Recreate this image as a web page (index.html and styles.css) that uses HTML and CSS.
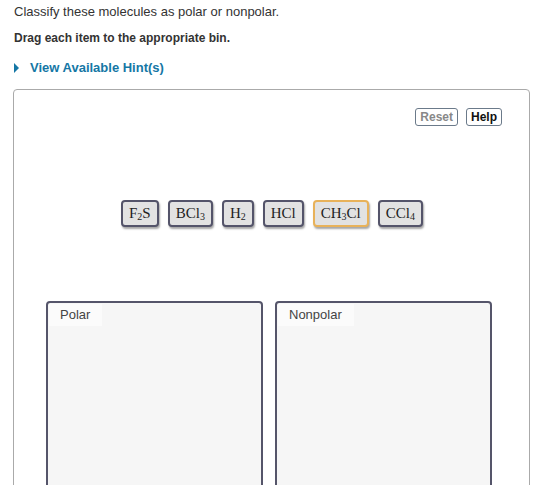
FILE: index.html
```html
<!DOCTYPE html>
<html lang="en">
<head>
    <meta charset="UTF-8">
    <title>Classify Molecules</title>
    <link rel="stylesheet" href="styles.css">
</head>
<body>

    <p class="prompt">Classify these molecules as polar or nonpolar.</p>
    <p class="instruction">Drag each item to the appropriate bin.</p>
    <div class="hint"><span class="arrow"></span>View Available Hint(s)</div>

    <div id="container">
        <div class="toolbar">
            <button class="btn btn-reset">Reset</button>
            <button class="btn btn-help">Help</button>
        </div>

        <div class="tiles">
            <div class="tile">F<sub>2</sub>S</div>
            <div class="tile">BCl<sub>3</sub></div>
            <div class="tile">H<sub>2</sub></div>
            <div class="tile">HCl</div>
            <div class="tile selected">CH<sub>3</sub>Cl</div>
            <div class="tile">CCl<sub>4</sub></div>
        </div>

        <div class="bins">
            <div class="bin"><div class="bin-label">Polar</div></div>
            <div class="bin"><div class="bin-label">Nonpolar</div></div>
        </div>
    </div>

</body>
</html>
```
FILE: styles.css
```css
body {
    font-family: 'Liberation Sans', Arial, sans-serif;
    margin: 0;
    padding: 4px 0 0 14px;
    color: #333;
    background-color: #fff;
    font-size: 12px;
    overflow: hidden;
}

.prompt {
    margin: 0 0 10px 0;
    font-size: 13px;
    line-height: 16px;
}

.instruction {
    margin: 0 0 14px 0;
    font-weight: bold;
    line-height: 16px;
}

.hint {
    display: flex;
    align-items: center;
    font-size: 13px;
    font-weight: bold;
    color: #1577a5;
    line-height: 16px;
}

.arrow {
    width: 0;
    height: 0;
    border-top: 5px solid transparent;
    border-bottom: 5px solid transparent;
    border-left: 5px solid #1577a5;
    margin-right: 11px;
}

#container {
    margin: 13px 0 0 -1px;
    width: 517px;
    height: 420px;
    border: 1px solid #aaa;
    border-radius: 4px;
    box-sizing: border-box;
}

.toolbar {
    display: flex;
    justify-content: flex-end;
    gap: 8px;
    padding: 18px 27px 0 0;
}

.btn {
    font-family: 'Liberation Sans', Arial, sans-serif;
    font-size: 12px;
    font-weight: bold;
    padding: 2px 4px;
    height: 18px;
    line-height: 12px;
    background-color: #fff;
    border: 1px solid #6b7a8a;
    border-radius: 3px;
}

.btn-reset {
    color: #888;
}

.btn-help {
    color: #111;
}

.tiles {
    display: flex;
    justify-content: center;
    gap: 9px;
    margin-top: 74px;
    padding-left: 1px;
}

.tile {
    font-family: 'Liberation Serif', 'DejaVu Serif', serif;
    font-size: 15px;
    color: #222;
    background-color: #e2e2e2;
    border: 2px solid #54546a;
    border-radius: 4px;
    padding: 0 6px;
    height: 27px;
    line-height: 23px;
    box-sizing: border-box;
    box-shadow: 1px 2px 2px rgba(0, 0, 0, 0.35);
}

.tile sub {
    font-size: 10px;
    vertical-align: -2px;
    line-height: 0;
}

.tile.selected {
    border-color: #e8b25a;
}

.bins {
    display: flex;
    gap: 12px;
    padding-left: 32px;
    margin-top: 74px;
}

.bin {
    width: 217px;
    height: 200px;
    background-color: #f6f6f6;
    border: 2px solid #55556a;
    border-radius: 4px;
    box-sizing: border-box;
}

.bin-label {
    display: inline-block;
    background-color: #fbfbfb;
    font-size: 13px;
    color: #444;
    padding: 3px 12px 4px 11px;
    margin: 1px 0 0 1px;
}
```
